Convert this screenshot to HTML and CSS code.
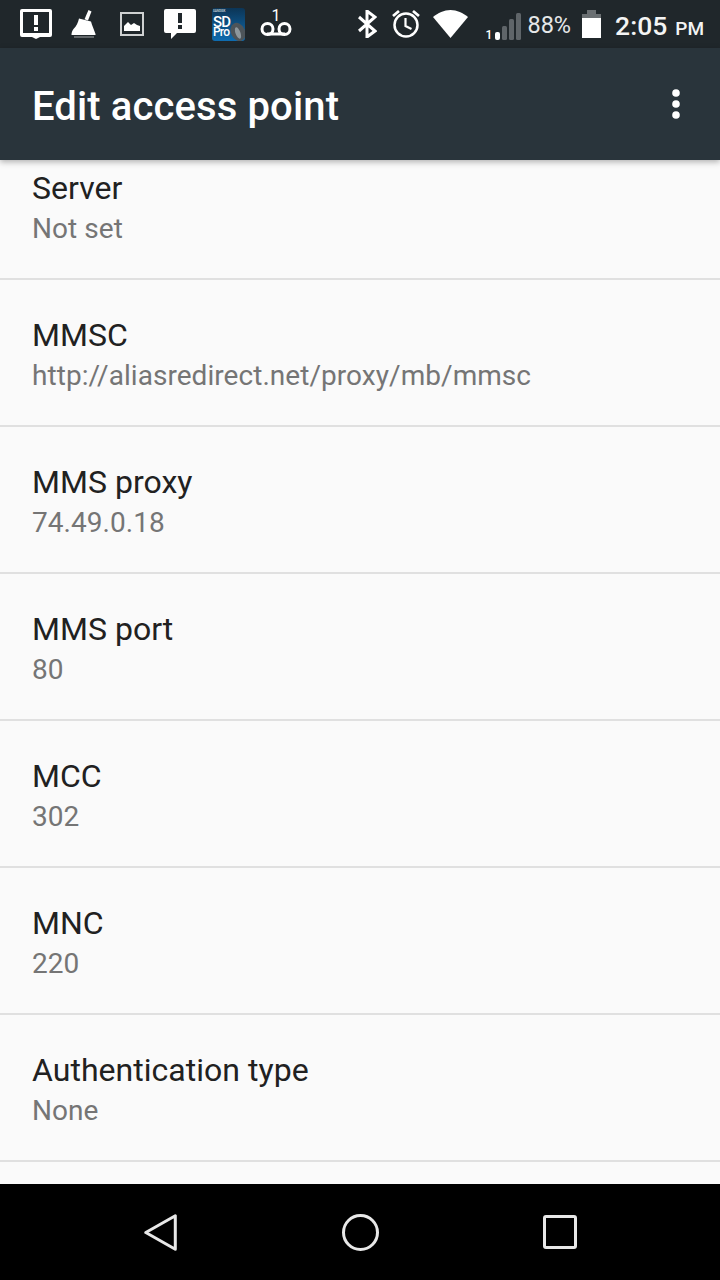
FILE: index.html
```html
<!DOCTYPE html>
<html>

<head>
  <title>Edit access point</title>
  <link rel="stylesheet" href="styles.css">
</head>

<body>
  <div class="screen">
    <div class="status-bar">
      <div class="status-left">
        <svg class="ic-alert" width="32" height="30" viewBox="0 0 32 30">
          <path fill-rule="evenodd" fill="#fff" d="M2 0h28a2 2 0 0 1 2 2v24a2 2 0 0 1-2 2H20l-4 2-4-2H2a2 2 0 0 1-2-2V2a2 2 0 0 1 2-2zM3 3v21h26V3z" />
          <rect x="14" y="6" width="4" height="10" fill="#fff" />
          <rect x="14" y="18" width="4" height="4" fill="#fff" />
        </svg>
        <svg class="ic-broom" width="25" height="30" viewBox="0 0 25 30">
          <path fill="#fff" d="M17.500 1l3 1.500-3.500 9-3.500-1.200z" />
          <path fill="#fff" d="M8 9.500l12 3c1 4 3 8 4.500 12.500v1H0.500c0-2 .5-4 2-6 3-3 4.500-6 5.500-10.500z" />
          <rect x="3" y="27" width="20" height="2" fill="#fff" opacity="0.3" />
        </svg>
        <svg class="ic-image" width="24" height="24" viewBox="0 0 24 24">
          <rect x="1" y="1" width="22" height="22" fill="none" stroke="#cfd1d2" stroke-width="2" />
          <path fill="#fff" d="M4 19v-5l4-4 3 3 3-2 3 2 3 1v5z" />
        </svg>
        <svg class="ic-chat" width="32" height="30" viewBox="0 0 32 30">
          <path fill="#fff" fill-rule="evenodd" d="M2 0h28a2 2 0 0 1 2 2v20a2 2 0 0 1-2 2H13l-6 6v-6H2a2 2 0 0 1-2-2V2a2 2 0 0 1 2-2zM14 4v10h4V4zM14 16v4h4v-4z" />
        </svg>
        <div class="sd-badge">
          <span class="sd-brand">SANDISK</span>
          <div class="sd-label">SD
Pro</div>
          <svg class="sd-card" width="16" height="19" viewBox="0 0 16 19">
            <ellipse cx="9" cy="10" rx="7" ry="9.500" fill="#4d5459" transform="rotate(-25 9 10)" />
            <ellipse cx="9" cy="11" rx="2.500" ry="6" fill="#8d979d" transform="rotate(-20 9 11)" />
          </svg>
        </div>
        <div class="voicemail">
          <span class="vm-count">1</span>
          <svg width="32" height="14" viewBox="0 0 32 14">
            <circle cx="7.500" cy="7" r="5.500" fill="none" stroke="#fff" stroke-width="3" />
            <circle cx="24.500" cy="7" r="5.500" fill="none" stroke="#fff" stroke-width="3" />
            <rect x="7" y="10.500" width="18" height="3" fill="#fff" />
          </svg>
        </div>
      </div>
      <div class="status-right">
        <svg class="ic-bt" width="19" height="28" viewBox="0 0 19 28">
          <path fill="none" stroke="#fff" stroke-width="3" d="M1 7l16 14-8 6V1l8 6L1 21" />
        </svg>
        <svg class="ic-clock" width="28" height="30" viewBox="0 0 28 30">
          <circle cx="14" cy="16" r="11.500" fill="none" stroke="#fff" stroke-width="2.500" />
          <path fill="none" stroke="#fff" stroke-width="2.200" d="M13.500 9v8l6 3" />
          <path fill="none" stroke="#fff" stroke-width="2.800" d="M1 7l6-5M27 7l-6-5" />
        </svg>
        <svg class="ic-wifi" width="35" height="28" viewBox="0 0 35 28">
          <path fill="#fff" d="M17.500 28L0 7C5 3 11 0 17.500 0S30 3 35 7z" />
        </svg>
        <div class="signal">
          <span class="sim-num">1</span>
          <svg width="26" height="27" viewBox="0 0 26 27">
            <rect x="0" y="19" width="5" height="8" rx="2" fill="#fff" />
            <rect x="7" y="13" width="5" height="14" rx="1.500" fill="#5f6569" />
            <rect x="14" y="6" width="5" height="21" rx="1.500" fill="#5f6569" />
            <rect x="21" y="0" width="5" height="27" rx="1.500" fill="#5f6569" />
          </svg>
        </div>
        <span class="batt-pct">88%</span>
        <svg class="ic-batt" width="19" height="29" viewBox="0 0 19 29">
          <path fill="#6a6f72" d="M5 0h9v4h5v4H0V4h5z" />
          <rect x="0" y="8" width="19" height="20" fill="#fff" />
        </svg>
        <span class="clock">2:05<span class="ampm">PM</span></span>
      </div>
    </div>

    <div class="toolbar">
      <h1 class="toolbar-title">Edit access point</h1>
      <svg class="overflow-btn" width="10" height="32" viewBox="0 0 10 32">
        <circle cx="5" cy="5" r="3.800" fill="#fff" />
        <circle cx="5" cy="16" r="3.800" fill="#fff" />
        <circle cx="5" cy="27" r="3.800" fill="#fff" />
      </svg>
    </div>

    <div class="content">
      <ul class="pref-list">
        <li class="pref-row">
          <div class="pref-title">Server</div>
          <div class="pref-value">Not set</div>
        </li>
        <li class="pref-row">
          <div class="pref-title">MMSC</div>
          <div class="pref-value">http://aliasredirect.net/proxy/mb/mmsc</div>
        </li>
        <li class="pref-row">
          <div class="pref-title">MMS proxy</div>
          <div class="pref-value">74.49.0.18</div>
        </li>
        <li class="pref-row">
          <div class="pref-title">MMS port</div>
          <div class="pref-value">80</div>
        </li>
        <li class="pref-row">
          <div class="pref-title">MCC</div>
          <div class="pref-value">302</div>
        </li>
        <li class="pref-row">
          <div class="pref-title">MNC</div>
          <div class="pref-value">220</div>
        </li>
        <li class="pref-row">
          <div class="pref-title">Authentication type</div>
          <div class="pref-value">None</div>
        </li>
      </ul>
    </div>

    <div class="nav-bar">
      <svg width="33" height="37" viewBox="0 0 33 37">
        <path fill="none" stroke="#e8e8e8" stroke-width="3" stroke-linejoin="round" d="M1.800 18.500L31.300 1.800v33.400z" />
      </svg>
      <svg width="37" height="37" viewBox="0 0 37 37">
        <circle cx="18.500" cy="18.500" r="17" fill="none" stroke="#e8e8e8" stroke-width="3" />
      </svg>
      <svg width="34" height="34" viewBox="0 0 34 34">
        <rect x="1.500" y="1.500" width="31" height="31" rx="1.500" fill="none" stroke="#e8e8e8" stroke-width="3" />
      </svg>
    </div>
  </div>
</body>

</html>
```

FILE: styles.css
```css
* {
  box-sizing: border-box;
}

body {
  margin: 0;
  background: #000;
  font-family: 'Roboto', sans-serif;
}

.screen {
  width: 720px;
  height: 1280px;
  display: flex;
  flex-direction: column;
  overflow: hidden;
}

/* status bar */
.status-bar {
  height: 48px;
  flex: none;
  background: #20272b;
  color: #fff;
  display: flex;
  justify-content: space-between;
  align-items: center;
  padding: 0 16px 0 20px;
}

.status-left,
.status-right {
  display: flex;
  align-items: center;
}

.status-left svg,
.status-right svg {
  display: block;
}

.ic-alert {
  margin-right: 19px;
}

.ic-broom {
  margin-right: 24px;
}

.ic-image {
  margin-right: 20px;
}

.ic-chat {
  margin-right: 16px;
}

.sd-badge {
  width: 33px;
  height: 33px;
  margin-right: 15px;
  padding: 1px 0 0 1px;
  border-radius: 3px;
  background: linear-gradient(#0c3556, #0f6cb0);
  position: relative;
  overflow: hidden;
  color: #fff;
  display: flex;
  flex-direction: column;
  font-weight: 500;
}

.sd-brand {
  font-size: 3px;
  line-height: 4px;
  margin-bottom: 4px;
  opacity: 0.8;
}

.sd-label {
  white-space: pre-line;
  font-size: 12px;
  line-height: 10px;
  letter-spacing: -0.8px;
}

.sd-label::first-line {
  font-size: 15px;
}

.sd-card {
  position: absolute;
  right: 0;
  bottom: 0;
}

.voicemail {
  width: 32px;
  display: flex;
  flex-direction: column;
  align-items: center;
  margin-bottom: 3px;
}

.vm-count {
  font-size: 16px;
  line-height: 13px;
}

.ic-bt {
  margin-right: 15px;
}

.ic-clock {
  margin-right: 13px;
}

.ic-wifi {
  margin-right: 17px;
}

.signal {
  display: flex;
  align-items: flex-end;
  margin-top: 5px;
  margin-right: 6px;
}

.sim-num {
  font-size: 12px;
  font-weight: 500;
  line-height: 10px;
  width: 10px;
}

.batt-pct {
  font-size: 23.500px;
  color: #e6e7e8;
  margin-top: 2px;
  margin-right: 11px;
}

.ic-batt {
  margin-right: 14px;
}

.clock {
  font-size: 26.500px;
  font-weight: 500;
  color: #f4f4f4;
  margin-top: 2px;
}

.ampm {
  font-size: 19px;
  margin-left: 8px;
}

/* toolbar */
.toolbar {
  height: 112px;
  flex: none;
  background: #29343b;
  display: flex;
  justify-content: space-between;
  align-items: center;
  padding: 0 39px 0 32px;
  position: relative;
  z-index: 2;
  box-shadow: 0 2px 6px rgba(0, 0, 0, 0.3);
}

.toolbar-title {
  margin: 0;
  padding-top: 4px;
  color: #fff;
  font-size: 40px;
  font-weight: 500;
  letter-spacing: 0.12px;
}

/* list */
.content {
  flex: 1;
  background: #fafafa;
  overflow: hidden;
}

.pref-list {
  list-style: none;
  margin: -27px 0 0;
  padding: 0;
}

.pref-row {
  height: 147px;
  padding: 34px 32px 0;
  border-bottom: 2px solid #e0e0e0;
}

.pref-title {
  font-size: 32px;
  line-height: 42px;
  letter-spacing: 0.03px;
  color: #212121;
}

.pref-value {
  font-size: 28px;
  line-height: 40px;
  letter-spacing: 0.05px;
  color: #757575;
}

/* nav bar */
.nav-bar {
  height: 96px;
  flex: none;
  background: #000;
  display: flex;
  align-items: center;
  justify-content: space-between;
  padding: 0 143px 0 144px;
}
```
